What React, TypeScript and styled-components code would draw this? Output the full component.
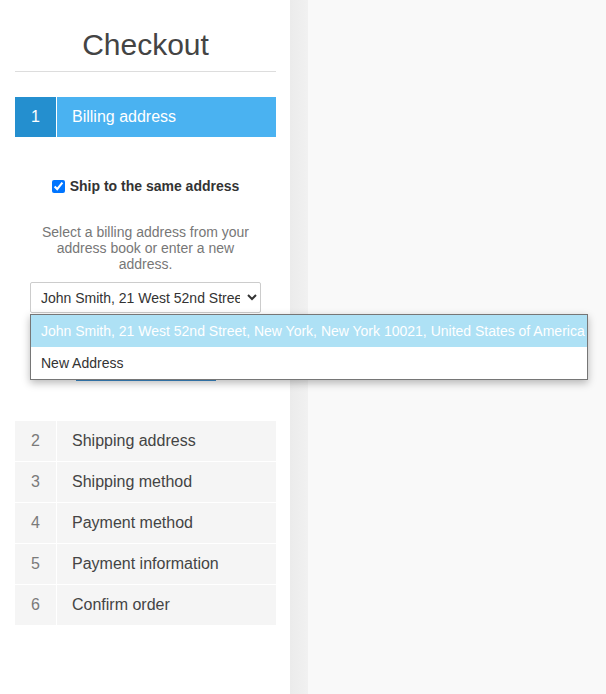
import React from "react";
import styled, { createGlobalStyle } from "styled-components";

const Global = createGlobalStyle`
  html, body { margin: 0; padding: 0; height: 100%; }
  body { font-family: "Liberation Sans", Arial, sans-serif; background: #f9f9f9; }
  #root { height: 100%; }
`;

const Page = styled.div`
  display: flex;
  height: 100vh;
  min-height: 694px;
`;

const Sidebar = styled.aside`
  width: 290px;
  flex: none;
  background: #fff;
  padding: 0 14px 0 15px;
  box-sizing: border-box;
`;

const Shade = styled.div`
  width: 18px;
  flex: none;
  background: linear-gradient(to right, #ebebeb, #f1f1f1);
`;

const Main = styled.main`
  flex: 1;
  background: #f9f9f9;
`;

const Title = styled.h1`
  margin: 0;
  padding-top: 28px;
  font-size: 30px;
  line-height: 34px;
  font-weight: 400;
  color: #444;
  text-align: center;
  padding-bottom: 9px;
  border-bottom: 1px solid #ddd;
`;

const StepList = styled.ol<{ $top: number }>`
  list-style: none;
  margin: ${(p) => p.$top}px 0 0;
  padding: 0;
  display: flex;
  flex-direction: column;
  gap: 1px;
`;

const Step = styled.li`
  display: flex;
  gap: 1px;
  height: 40px;
`;

const StepNum = styled.span<{ $active?: boolean }>`
  width: 41px;
  flex: none;
  display: flex;
  align-items: center;
  justify-content: center;
  font-size: 16px;
  color: ${(p) => (p.$active ? "#fff" : "#7a7a7a")};
  background: ${(p) => (p.$active ? "#248fcf" : "#f5f5f5")};
`;

const StepLabel = styled.span<{ $active?: boolean }>`
  flex: 1;
  display: flex;
  align-items: center;
  padding-left: 15px;
  font-size: 16px;
  color: ${(p) => (p.$active ? "#fff" : "#444")};
  background: ${(p) => (p.$active ? "#4ab2f1" : "#f5f5f5")};
`;

const Body = styled.div`
  display: flex;
  flex-direction: column;
  align-items: center;
  padding: 41px 0 0;
`;

const CheckRow = styled.label`
  display: flex;
  align-items: center;
  gap: 5px;
  font-size: 14px;
  line-height: 16px;
  font-weight: 700;
  color: #333;
`;

const Check = styled.input`
  width: 13px;
  height: 13px;
  margin: 0;
  accent-color: #0075ff;
`;

const Hint = styled.p`
  margin: 30px 0 0;
  width: 231px;
  font-size: 14px;
  line-height: 16px;
  color: #777;
  text-align: center;
`;

const SelectWrap = styled.div`
  position: relative;
  margin-top: 10px;
  width: 231px;
`;

const Select = styled.select`
  width: 231px;
  height: 31px;
  box-sizing: border-box;
  border: 1px solid #ccc;
  border-radius: 2px;
  background: #fff;
  padding: 0 4px 0 6px;
  font-family: "Liberation Sans", Arial, sans-serif;
  font-size: 14px;
  color: #333;
`;

const Menu = styled.ul`
  position: absolute;
  z-index: 2;
  top: 32px;
  left: 0;
  width: 558px;
  margin: 0;
  padding: 0;
  list-style: none;
  background: #fff;
  border: 1px solid #767676;
  box-sizing: border-box;
  box-shadow: 0 3px 8px rgba(0, 0, 0, 0.28);
`;

const Option = styled.li<{ $selected?: boolean }>`
  height: 32px;
  display: flex;
  align-items: center;
  padding-left: 10px;
  font-size: 14px;
  white-space: nowrap;
  overflow: hidden;
  color: ${(p) => (p.$selected ? "#fff" : "#333")};
  background: ${(p) => (p.$selected ? "#aee1f5" : "#fff")};
`;

const Continue = styled.button`
  margin-top: 36px;
  width: 140px;
  height: 32px;
  border: 0;
  background: #3d8dcc;
  color: #fff;
  font-family: "Liberation Sans", Arial, sans-serif;
  font-size: 15px;
`;

const address =
  "John Smith, 21 West 52nd Street, New York, New York 10021, United States of America";

const steps = [
  "Shipping address",
  "Shipping method",
  "Payment method",
  "Payment information",
  "Confirm order",
];

export default function App() {
  return (
    <>
      <Global />
      <Page>
        <Sidebar>
          <Title>Checkout</Title>
          <StepList $top={25}>
            <Step>
              <StepNum $active>1</StepNum>
              <StepLabel $active>Billing address</StepLabel>
            </Step>
          </StepList>
          <Body>
            <CheckRow>
              <Check type="checkbox" defaultChecked />
              Ship to the same address
            </CheckRow>
            <Hint>Select a billing address from your address book or enter a new address.</Hint>
            <SelectWrap>
              <Select defaultValue="1">
                <option value="1">{address}</option>
                <option value="0">New Address</option>
              </Select>
              <Menu>
                <Option $selected>{address}</Option>
                <Option>New Address</Option>
              </Menu>
            </SelectWrap>
            <Continue>Continue</Continue>
          </Body>
          <StepList $top={40}>
            {steps.map((s, i) => (
              <Step key={s}>
                <StepNum>{i + 2}</StepNum>
                <StepLabel>{s}</StepLabel>
              </Step>
            ))}
          </StepList>
        </Sidebar>
        <Shade />
        <Main />
      </Page>
    </>
  );
}
